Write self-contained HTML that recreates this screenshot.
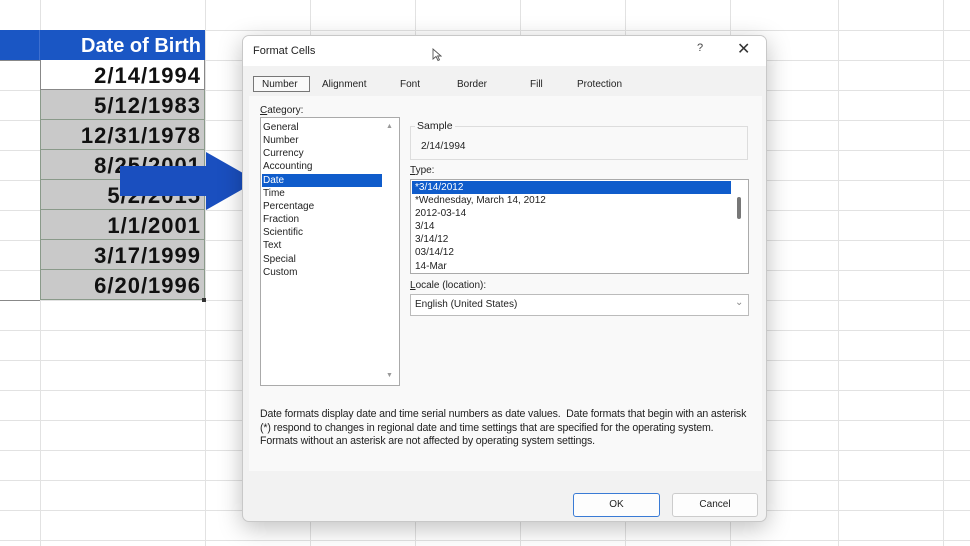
<!DOCTYPE html><html><head><style>
*{margin:0;padding:0;box-sizing:border-box}
body{width:970px;height:546px;overflow:hidden;background:#fff;position:relative;font-family:"Liberation Sans",sans-serif}
.a{position:absolute}
.vl{position:absolute;top:0;width:1px;height:546px;background:#e2e2e2}
.hl{position:absolute;left:0;height:1px;width:970px;background:#e2e2e2}
.cell{position:absolute;left:40px;width:165px;height:30px;background:#c9c9c9;border:1px solid #8a9a8a;border-top:none;font-weight:bold;font-size:22px;letter-spacing:1px;text-align:right;padding-right:3px;line-height:31px;color:#111}
.d{font-size:10px;color:#222}
.li{position:absolute;left:263px;font-size:10px;color:#222}
.ti{position:absolute;left:415px;font-size:10px;color:#222}
.tab{position:absolute;top:79px;font-size:10px;color:#222}
</style></head><body>
<div class="vl" style="left:40px"></div><div class="vl" style="left:205px"></div><div class="vl" style="left:310px"></div><div class="vl" style="left:415px"></div><div class="vl" style="left:520px"></div><div class="vl" style="left:625px"></div><div class="vl" style="left:730px"></div><div class="vl" style="left:838px"></div><div class="vl" style="left:943px"></div>
<div class="hl" style="top:30px"></div><div class="hl" style="top:60px"></div><div class="hl" style="top:90px"></div><div class="hl" style="top:120px"></div><div class="hl" style="top:150px"></div><div class="hl" style="top:180px"></div><div class="hl" style="top:210px"></div><div class="hl" style="top:240px"></div><div class="hl" style="top:270px"></div><div class="hl" style="top:300px"></div><div class="hl" style="top:330px"></div><div class="hl" style="top:360px"></div><div class="hl" style="top:390px"></div><div class="hl" style="top:420px"></div><div class="hl" style="top:450px"></div><div class="hl" style="top:480px"></div><div class="hl" style="top:510px"></div><div class="hl" style="top:540px"></div>
<div class="a" style="left:0;top:30px;width:205px;height:30px;background:#1a56c4"></div>
<div class="a" style="left:39px;top:30px;width:1px;height:30px;background:#3d6fd0"></div>
<div class="a" style="left:40px;top:30px;width:161px;height:30px;color:#fff;font-weight:bold;font-size:20px;text-align:right;line-height:32px">Date of Birth</div>
<div class="a" style="left:0;top:60px;width:205px;height:1px;background:#888"></div>
<div class="cell" style="top:60px;background:#fff;border-color:#888">2/14/1994</div>
<div class="cell" style="top:90px">5/12/1983</div>
<div class="cell" style="top:120px">12/31/1978</div>
<div class="cell" style="top:150px">8/25/2001</div>
<div class="cell" style="top:180px">5/2/2015</div>
<div class="cell" style="top:210px">1/1/2001</div>
<div class="cell" style="top:240px">3/17/1999</div>
<div class="cell" style="top:270px">6/20/1996</div>
<div class="a" style="left:0;top:300px;width:40px;height:1px;background:#888"></div>
<div class="a" style="left:202px;top:298px;width:4px;height:4px;background:#333"></div>
<svg class="a" style="left:0;top:0" width="300" height="260"><polygon points="120,166 206,166 206,152 257,181 206,210 206,196 120,196" fill="#1a4fbf"/></svg>
<div class="a" style="left:242px;top:35px;width:525px;height:487px;background:#f2f2f2;border:1px solid #c8c8c8;border-radius:7px;box-shadow:0 6px 24px rgba(0,0,0,.25);overflow:hidden">
<div class="a" style="left:0;top:0;width:525px;height:30px;background:#fff"></div>
<div class="a" style="left:10px;top:9px;font-size:11px;color:#222">Format Cells</div>
<div class="a" style="left:454px;top:6px;font-size:11px;color:#444">?</div>
<div class="a" style="left:494px;top:3px;font-size:16px;color:#333">✕</div>
<div class="a" style="left:6px;top:60px;width:513px;height:375px;background:#f9f9f9"></div>
</div>
<svg class="a" style="left:432px;top:48px" width="10" height="14"><path d="M1 1 L1 11 L4 8.5 L6 12.5 L7.5 11.8 L5.6 8 L9 8 Z" fill="#fff" stroke="#555" stroke-width="0.9"/></svg>
<div class="a" style="left:253px;top:76px;width:57px;height:16px;border:1px solid #777;background:#f9f9f9"></div>
<div class="tab" style="left:262px">Number</div><div class="tab" style="left:322px">Alignment</div><div class="tab" style="left:400px">Font</div><div class="tab" style="left:457px">Border</div><div class="tab" style="left:530px">Fill</div><div class="tab" style="left:577px">Protection</div>
<div class="a d" style="left:260px;top:105px"><u>C</u>ategory:</div>
<div class="a" style="left:260px;top:117px;width:140px;height:269px;background:#fff;border:1px solid #aaa"></div>
<div class="a" style="left:262px;top:174px;width:120px;height:13px;background:#0f5ccb"></div>
<div class="li" style="top:122px">General</div><div class="li" style="top:135px">Number</div><div class="li" style="top:148px">Currency</div><div class="li" style="top:161px">Accounting</div><div class="li" style="top:175px;color:#fff">Date</div><div class="li" style="top:188px">Time</div><div class="li" style="top:201px">Percentage</div><div class="li" style="top:214px">Fraction</div><div class="li" style="top:227px">Scientific</div><div class="li" style="top:240px">Text</div><div class="li" style="top:254px">Special</div><div class="li" style="top:267px">Custom</div>
<div class="a" style="left:386px;top:123px;font-size:7px;color:#999">▲</div><div class="a" style="left:386px;top:372px;font-size:7px;color:#999">▼</div>
<div class="a" style="left:410px;top:126px;width:338px;height:34px;border:1px solid #ddd"></div>
<div class="a d" style="left:415px;top:120px;background:#f9f9f9;padding:0 2px;font-size:10.5px">Sample</div>
<div class="a d" style="left:421px;top:141px">2/14/1994</div>
<div class="a d" style="left:410px;top:165px"><u>T</u>ype:</div>
<div class="a" style="left:410px;top:179px;width:339px;height:95px;background:#fff;border:1px solid #aaa"></div>
<div class="a" style="left:412px;top:181px;width:319px;height:13px;background:#0f5ccb"></div>
<div class="ti" style="top:182px;color:#fff">*3/14/2012</div><div class="ti" style="top:195px">*Wednesday, March 14, 2012</div><div class="ti" style="top:208px">2012-03-14</div><div class="ti" style="top:221px">3/14</div><div class="ti" style="top:234px">3/14/12</div><div class="ti" style="top:247px">03/14/12</div><div class="ti" style="top:261px">14-Mar</div>
<div class="a" style="left:737px;top:197px;width:4px;height:22px;background:#777;border-radius:2px"></div>
<div class="a d" style="left:410px;top:280px"><u>L</u>ocale (location):</div>
<div class="a" style="left:410px;top:294px;width:339px;height:22px;background:#fff;border:1px solid #bbb"></div>
<div class="a d" style="left:415px;top:299px">English (United States)</div>
<div class="a" style="left:735px;top:297px;font-size:10px;color:#888">⌄</div>
<div class="a d" style="left:260px;top:408px;line-height:13.5px;width:500px;font-size:10.6px;letter-spacing:-0.15px;white-space:nowrap">Date formats display date and time serial numbers as date values.&nbsp; Date formats that begin with an asterisk<br>(*) respond to changes in regional date and time settings that are specified for the operating system.<br>Formats without an asterisk are not affected by operating system settings.</div>
<div class="a" style="left:573px;top:493px;width:87px;height:24px;background:#fdfdfd;border:1px solid #3a7bd5;border-radius:3px;font-size:10px;text-align:center;line-height:22px;color:#222">OK</div>
<div class="a" style="left:672px;top:493px;width:86px;height:24px;background:#fdfdfd;border:1px solid #ccc;border-radius:3px;font-size:10px;text-align:center;line-height:22px;color:#222">Cancel</div>
</body></html>
